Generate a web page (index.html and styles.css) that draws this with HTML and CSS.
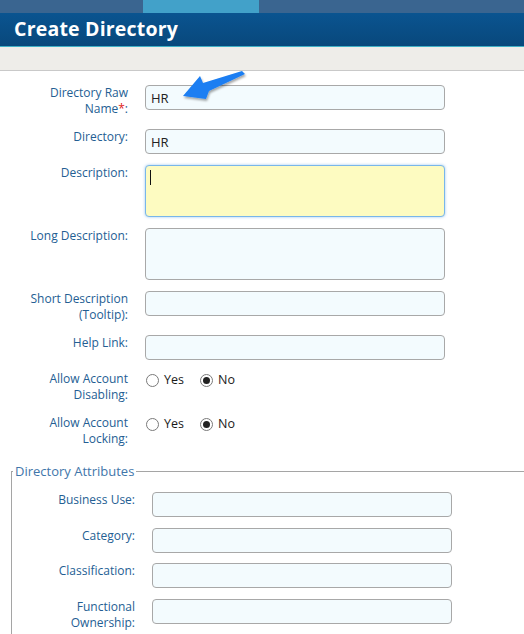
FILE: index.html
```html
<!DOCTYPE html>
<html>
<head>
<meta charset="utf-8">
<link rel="stylesheet" href="styles.css">
</head>
<body>
<div class="topstrip"><div class="tab"></div></div>
<div class="header"><h1 class="title">Create Directory</h1></div>
<div class="toolbar"></div>
<form class="form">
  <div class="row">
    <label class="lbl">Directory Raw<br>Name<span class="req">*</span>:</label>
    <div class="field"><input class="inp" type="text" value="HR"></div>
  </div>
  <div class="row">
    <label class="lbl">Directory:</label>
    <div class="field"><input class="inp" type="text" value="HR"></div>
  </div>
  <div class="row">
    <label class="lbl">Description:</label>
    <div class="field"><div class="ta focus"><span class="caret"></span></div></div>
  </div>
  <div class="row">
    <label class="lbl">Long Description:</label>
    <div class="field"><div class="ta"></div></div>
  </div>
  <div class="row">
    <label class="lbl">Short Description<br>(Tooltip):</label>
    <div class="field"><input class="inp" type="text"></div>
  </div>
  <div class="row">
    <label class="lbl">Help Link:</label>
    <div class="field"><input class="inp" type="text"></div>
  </div>
  <div class="row">
    <label class="lbl">Allow Account<br>Disabling:</label>
    <div class="field radios">
      <span class="opt"><span class="radio"></span>Yes</span>
      <span class="opt"><span class="radio on"></span>No</span>
    </div>
  </div>
  <div class="row">
    <label class="lbl">Allow Account<br>Locking:</label>
    <div class="field radios">
      <span class="opt"><span class="radio"></span>Yes</span>
      <span class="opt"><span class="radio on"></span>No</span>
    </div>
  </div>
  <fieldset class="attrs">
    <legend class="legend">Directory Attributes</legend>
    <div class="row frow">
      <label class="lbl flbl">Business Use:</label>
      <div class="field"><input class="inp" type="text"></div>
    </div>
    <div class="row frow">
      <label class="lbl flbl">Category:</label>
      <div class="field"><input class="inp" type="text"></div>
    </div>
    <div class="row frow">
      <label class="lbl flbl">Classification:</label>
      <div class="field"><input class="inp" type="text"></div>
    </div>
    <div class="row frow">
      <label class="lbl flbl">Functional<br>Ownership:</label>
      <div class="field"><input class="inp" type="text"></div>
    </div>
  </fieldset>
</form>
<svg class="arrow" width="80" height="50" viewBox="0 0 80 50">
  <defs>
    <filter id="sh" x="-20%" y="-20%" width="140%" height="160%">
      <feDropShadow dx="1" dy="2" stdDeviation="1.2" flood-color="#000" flood-opacity="0.35"/>
    </filter>
  </defs>
  <polygon filter="url(#sh)" fill="#1b7ef2" points="3,34 20,14 23,21 62,9 65,12 29,29 26,37"/>
</svg>
</body>
</html>
```
FILE: styles.css
```css
html, body {
  margin: 0;
  padding: 0;
  background: #fff;
  overflow: hidden;
  font-family: "Open Sans", "Liberation Sans", sans-serif;
}
body {
  position: relative;
  width: 524px;
  height: 634px;
}
.topstrip {
  height: 13px;
  background: #3a6590;
  display: flex;
}
.tab {
  margin-left: 143px;
  width: 116px;
  background: #42a1c9;
}
.header {
  height: 33px;
  background: linear-gradient(#0a5490, #08487c);
  border-bottom: 1px solid #3fb0c6;
  display: flex;
  align-items: center;
}
.title {
  margin: 0 0 0 14px;
  color: #fff;
  font-size: 19.5px;
  font-weight: 700;
  letter-spacing: 0.2px;
  line-height: 1;
  padding-bottom: 1px;
}
.toolbar {
  height: 23px;
  background: #eeede9;
  border-bottom: 1px solid #c9c9c9;
}
.form {
  margin: 0;
  padding: 14px 0 0 0;
}
.row {
  display: flex;
  align-items: flex-start;
  gap: 17px;
  margin-bottom: 11px;
}
.lbl {
  width: 128px;
  flex: none;
  text-align: right;
  font-size: 12px;
  line-height: 16px;
  color: #245e93;
  padding-bottom: 1px;
}
.req {
  color: #e02020;
}
.field {
  flex: none;
}
.inp {
  display: block;
  box-sizing: border-box;
  width: 300px;
  height: 25px;
  margin: 0;
  padding: 0 5px;
  border: 1px solid #a8a8a8;
  border-radius: 4px;
  background: #f3fbfe;
  font-family: "Open Sans", "Liberation Sans", sans-serif;
  font-size: 13px;
  color: #222;
  outline: none;
}
.ta {
  box-sizing: border-box;
  width: 300px;
  height: 52px;
  border: 1px solid #a8a8a8;
  border-radius: 4px;
  background: #f3fbfe;
}
.ta.focus {
  background: #fdfbc1;
  border-color: #78b6ea;
  box-shadow: 0 0 3px rgba(90, 160, 230, 0.6);
  padding: 4px 0 0 4px;
}
.caret {
  display: block;
  width: 1px;
  height: 15px;
  background: #111;
}
.radios {
  display: flex;
  gap: 15px;
  padding-top: 1px;
}
.opt {
  display: flex;
  align-items: center;
  gap: 5px;
  font-size: 12.5px;
  line-height: 16px;
  color: #1a1a1a;
}
.radio {
  box-sizing: border-box;
  width: 13px;
  height: 13px;
  border: 1px solid #7a7a7a;
  border-radius: 50%;
  background: #fff;
  margin-left: 1px;
  display: flex;
  align-items: center;
  justify-content: center;
}
.radio.on::after {
  content: "";
  width: 7px;
  height: 7px;
  border-radius: 50%;
  background: #222;
}
.attrs {
  margin: 15px 0 0 11px;
  padding: 13px 0 0 0;
  border: 1px solid #a5a5a5;
  border-right: none;
  border-bottom: none;
}
.legend {
  padding: 0 2px;
  margin-left: 1px;
  font-size: 13px;
  line-height: 16px;
  color: #3f76aa;
}
.frow {
  margin-bottom: 10.5px;
}
.flbl {
  width: 123px;
}
.arrow {
  position: absolute;
  left: 180px;
  top: 62px;
}
```
